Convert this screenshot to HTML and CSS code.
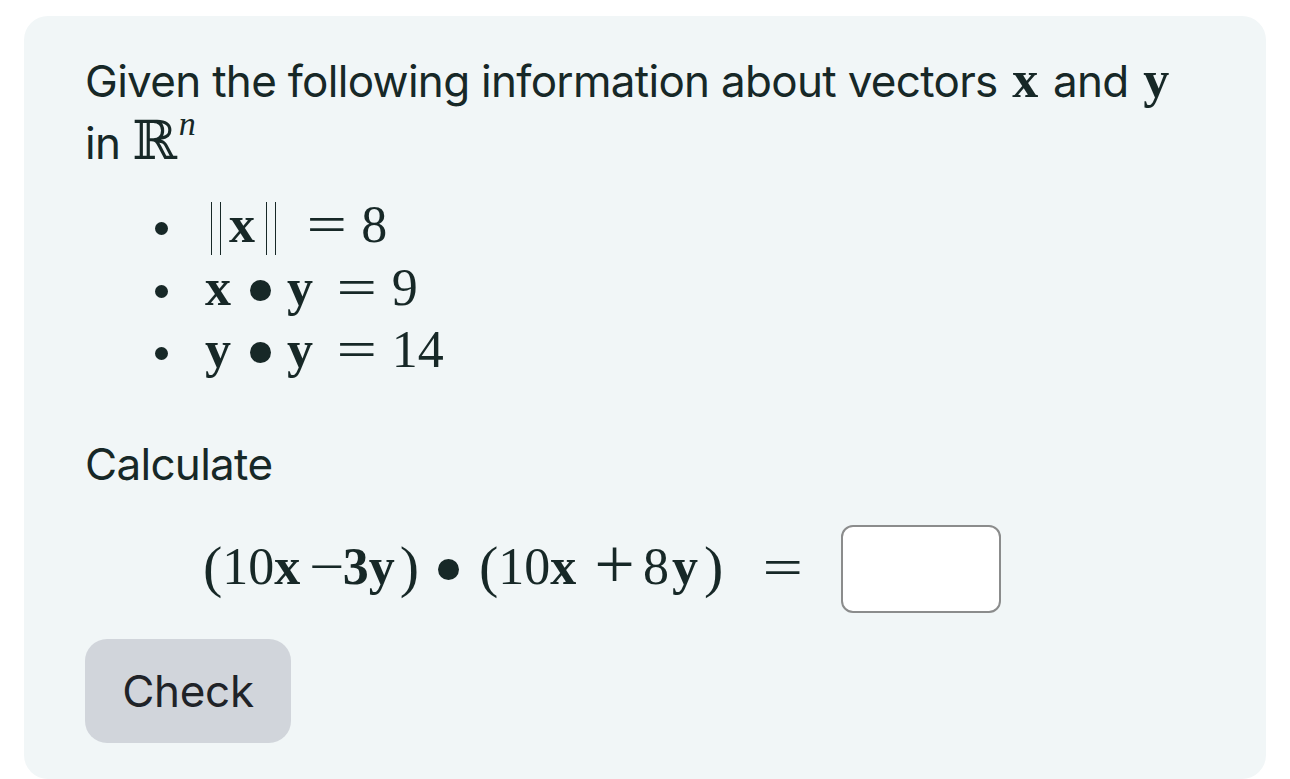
FILE: index.html
```html
<!DOCTYPE html>
<html lang="en">
<head>
<meta charset="utf-8">
<title>Vector dot product</title>
<link rel="stylesheet" href="styles.css">
</head>
<body>
<main class="card">
  <p class="prompt">Given the following information about vectors <span class="mvec">x</span> and <span class="mvec">y</span><br>in <span class="bb">ℝ</span><span class="sup">n</span></p>
  <ul class="facts">
    <li><span class="math"><span class="norm norm-l"></span><span class="mvec in-norm">x</span><span class="norm norm-r"></span><span class="op rel rel-1">=</span><span class="num">8</span></span></li>
    <li><span class="math"><span class="mvec">x</span><span class="dot"></span><span class="mvec">y</span><span class="op rel">=</span><span class="num">9</span></span></li>
    <li><span class="math"><span class="mvec">y</span><span class="dot"></span><span class="mvec">y</span><span class="op rel">=</span><span class="num">14</span></span></li>
  </ul>
  <p class="prompt calc">Calculate</p>
  <div class="eq-row">
    <span class="math display"><span class="paren">(</span>10<span class="mvec">x</span><span class="op minus">−</span><span class="mvec three">3</span><span class="mvec">y</span><span class="paren close1">)</span><span class="dot big"></span><span class="paren open2">(</span>10<span class="mvec">x</span><span class="plus">+</span><span class="eight">8</span><span class="mvec y2">y</span><span class="paren close2">)</span></span>
    <span class="math op equals">=</span>
    <input class="answer" type="text" aria-label="Answer">
  </div>
  <button class="check" type="button">Check</button>
</main>
</body>
</html>
```
FILE: styles.css
```css
html, body {
  margin: 0;
  padding: 0;
  background: #ffffff;
}

body {
  padding: 16px 24px 0 24px;
  font-family: "Inter", "Noto Sans", sans-serif;
  color: #172827;
}

.card {
  display: block;
  background: #f1f6f7;
  border-radius: 24px;
  padding: 33px 61px 36px 61px;
}

.prompt {
  margin: 0;
  font-size: 44px;
  line-height: 62px;
  letter-spacing: -0.7px;
}

.math {
  font-family: "Liberation Serif", "Times New Roman", serif;
  font-size: 52px;
  letter-spacing: 0;
}

.mvec {
  font-family: "Liberation Serif", "Times New Roman", serif;
  font-weight: bold;
  font-size: 52px;
  letter-spacing: 0;
}

.prompt .mvec {
  margin: 0 3px;
}

.bb {
  font-family: "DejaVu Serif", "DejaVu Sans", serif;
  font-size: 54px;
  line-height: 0;
  letter-spacing: 0;
  margin-left: 0;
}

.sup {
  font-family: "Liberation Serif", serif;
  font-style: italic;
  font-size: 34px;
  position: relative;
  top: -24px;
  line-height: 0;
  margin-left: 2px;
}

.facts {
  list-style: none;
  margin: 20px 0 0 0;
  padding: 0 0 0 70px;
}

.facts li {
  line-height: 62px;
  height: 62.5px;
}

.facts li::before {
  content: "";
  display: inline-block;
  width: 13px;
  height: 13px;
  border-radius: 50%;
  background: #172827;
  margin-right: 37px;
  vertical-align: 7px;
}

.norm {
  display: inline-block;
  width: 8px;
  height: 53px;
  border-left: 1.6px solid #172827;
  border-right: 1.6px solid #172827;
  vertical-align: -13px;
}

.norm-l { margin-left: 6px; }
.in-norm { margin-left: 8px; }
.norm-r { margin-left: 11px; }

.dot {
  display: inline-block;
  width: 21px;
  height: 21px;
  border-radius: 50%;
  background: #172827;
  margin: 0 16px 0 19px;
  vertical-align: 4px;
}

.op {
  display: inline-block;
  transform: scaleX(1.38);
}

.rel {
  margin: 0 21px 0 28.5px;
}

.rel-1 {
  margin-left: 35.5px;
  margin-right: 20.5px;
}

.calc {
  margin-top: 51px;
}

.eq-row {
  display: flex;
  align-items: center;
  margin-top: 30px;
  height: 88px;
}

.display {
  margin-left: 118px;
  white-space: nowrap;
  position: relative;
  top: -2px;
}

.paren {
  font-size: 58px;
  vertical-align: -2px;
}

.minus { margin-left: 12px; transform: scaleX(1.2); }
.three { margin-left: 1px; }
.close1 { margin-left: 5px; }
.dot.big { margin: 0 0 0 19px; }
.open2 { margin-left: 20px; }
.plus {
  font-size: 72px;
  line-height: 0;
  vertical-align: -4px;
  margin-left: 18px;
}
.eight { margin-left: 8px; }
.y2 { margin-left: 3px; }
.close2 { margin-left: 6px; }

.equals {
  margin-left: 45px;
  position: relative;
  top: -1px;
}

.answer {
  box-sizing: border-box;
  width: 160px;
  height: 88px;
  margin: 0 0 0 43px;
  border: 2px solid #8b8c8c;
  border-radius: 12px;
  background: #ffffff;
  font-size: 40px;
  padding: 0 12px;
  outline: none;
}

.check {
  display: block;
  margin-top: 26px;
  width: 206px;
  height: 104px;
  border: 0;
  border-radius: 22px;
  background: #d1d5db;
  color: #1f2328;
  font-family: "Inter", "Noto Sans", sans-serif;
  font-size: 44px;
  letter-spacing: -0.3px;
  padding: 0;
  cursor: pointer;
}
```
